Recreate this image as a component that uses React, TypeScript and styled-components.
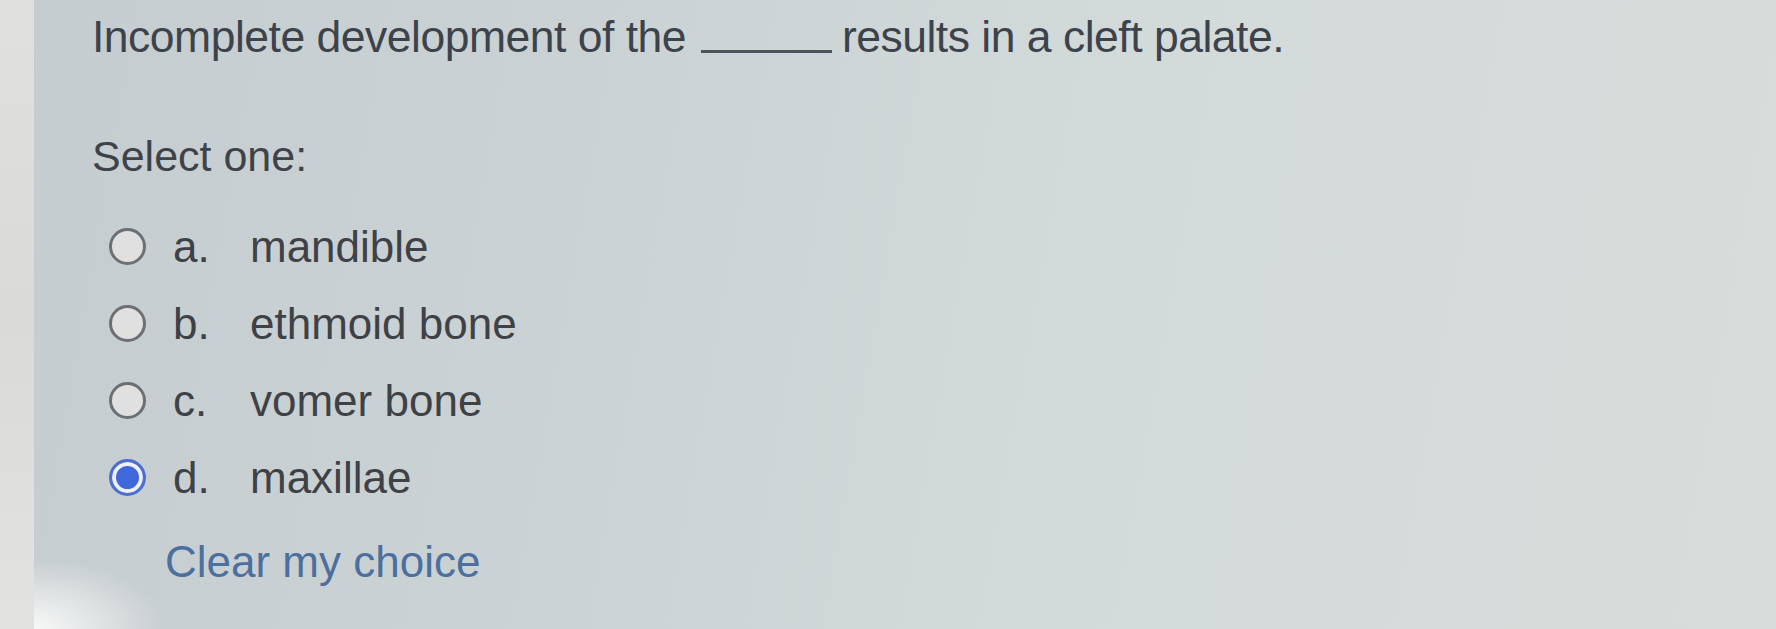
import React from 'react';
import styled, { createGlobalStyle } from 'styled-components';

const GlobalStyle = createGlobalStyle`
  html, body {
    margin: 0;
    padding: 0;
    overflow: hidden;
  }
  body {
    font-family: 'Liberation Sans', Arial, Helvetica, sans-serif;
  }
`;

type Choice = {
  letter: string;
  label: string;
  checked?: boolean;
};

const choices: Choice[] = [
  { letter: 'a.', label: 'mandible' },
  { letter: 'b.', label: 'ethmoid bone' },
  { letter: 'c.', label: 'vomer bone' },
  { letter: 'd.', label: 'maxillae', checked: true },
];

const Screen = styled.div`
  display: flex;
  width: 1776px;
  height: 629px;
  overflow: hidden;
  background: #d2d8d8;
`;

const Bezel = styled.div`
  width: 34px;
  flex-shrink: 0;
  background: linear-gradient(180deg, #e0e0de 0%, #dadbd9 50%, #e2e3e0 100%);
`;

const Panel = styled.main`
  flex: 1;
  display: flex;
  flex-direction: column;
  padding: 10px 0 0 58px;
  background:
    radial-gradient(ellipse 130px 70px at 0% 100%, rgba(250, 251, 250, 0.95), rgba(250, 251, 250, 0) 100%),
    linear-gradient(100deg, #c6cdd0 0%, #cbd2d4 30%, #d3dada 60%, #d7dddb 100%);
`;

const Question = styled.div`
  font-size: 44.5px;
  line-height: 53px;
  color: #3d434b;
  letter-spacing: -0.5px;
  white-space: nowrap;
`;

const Blank = styled.span`
  display: inline-block;
  width: 131px;
  height: 3px;
  margin: 0 10px 0 3px;
  background: #4d545c;
  vertical-align: -1px;
`;

const Prompt = styled.div`
  margin-top: 69px;
  font-size: 43px;
  line-height: 49px;
  color: #3e434a;
`;

const Options = styled.div`
  display: flex;
  flex-direction: column;
  margin-top: 27px;
  padding-left: 17px;
`;

const Row = styled.label`
  display: flex;
  align-items: center;
  height: 77px;
  font-size: 44px;
  color: #3e4247;
`;

const Radio = styled.span<{ $checked?: boolean }>`
  box-sizing: border-box;
  width: 37px;
  height: 37px;
  border-radius: 50%;
  flex-shrink: 0;
  border: ${(p) => (p.$checked ? '3px solid #4f6fd0' : '3px solid #6c6f73')};
  background: ${(p) => (p.$checked ? '#3f68da' : '#dfe0df')};
  box-shadow: ${(p) => (p.$checked ? 'inset 0 0 0 4px #eef0f4' : 'none')};
`;

const Letter = styled.span`
  width: 77px;
  margin-left: 27px;
  flex-shrink: 0;
`;

const Label = styled.span`
  white-space: nowrap;
`;

const ClearLink = styled.a`
  margin-top: 21px;
  margin-left: 73px;
  font-size: 44px;
  line-height: 50px;
  color: #4b6f9f;
  text-decoration: none;
  cursor: pointer;
`;

export default function App() {
  return (
    <>
      <GlobalStyle />
      <Screen>
        <Bezel />
        <Panel>
          <Question>
            Incomplete development of the <Blank />results in a cleft palate.
          </Question>
          <Prompt>Select one:</Prompt>
          <Options>
            {choices.map((c) => (
              <Row key={c.letter}>
                <Radio $checked={c.checked} />
                <Letter>{c.letter}</Letter>
                <Label>{c.label}</Label>
              </Row>
            ))}
          </Options>
          <ClearLink>Clear my choice</ClearLink>
        </Panel>
      </Screen>
    </>
  );
}
